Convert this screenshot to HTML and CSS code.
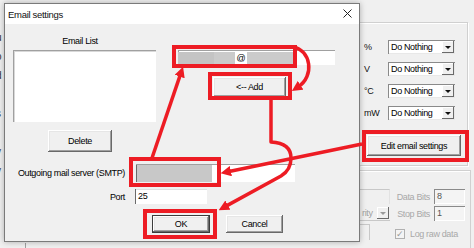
FILE: index.html
```html
<!DOCTYPE html>
<html>
<head>
<meta charset="utf-8">
<link rel="stylesheet" href="styles.css">
</head>
<body>
<div class="parent">
  <div class="p-left">
    <div class="edge">
      <span>u</span><span>o</span><span>d</span><span>r</span><span>s</span><span>l</span><span>v</span><span>v</span><span> </span><span> </span><span>r</span>
    </div>
    <div class="p-bottom">
      <span class="vline"></span>
      <span class="hundred">100</span>
    </div>
  </div>
  <div class="p-right">
    <div class="grp1">
      <div class="rows">
        <div class="row"><span class="lbl">%</span><div class="combo"><span class="ctext">Do Nothing</span><span class="arr"></span></div></div>
        <div class="row"><span class="lbl">V</span><div class="combo"><span class="ctext">Do Nothing</span><span class="arr"></span></div></div>
        <div class="row"><span class="lbl">°C</span><div class="combo"><span class="ctext">Do Nothing</span><span class="arr"></span></div></div>
        <div class="row"><span class="lbl">mW</span><div class="combo"><span class="ctext">Do Nothing</span><span class="arr"></span></div></div>
      </div>
      <div class="btn edit">Edit email settings</div>
    </div>
    <div class="grp2">
      <div class="dfield"></div>
      <span class="dlbl">Data Bits</span>
      <div class="sfield">8</div>
      <div class="dcombo"><span class="ctext">rity</span><span class="arr dis"></span></div>
      <span class="dlbl">Stop Bits</span>
      <div class="sfield">1</div>
      <div class="dfield low"></div>
      <div class="chk"><span class="box">✓</span><span class="dlbl2">Log raw data</span></div>
    </div>
  </div>
</div>

<div class="dialog">
  <div class="titlebar">
    <span class="title">Email settings</span>
    <svg class="close" width="9" height="9" viewBox="0 0 9 9"><path d="M0.5 0.5 L8.5 8.5 M8.5 0.5 L0.5 8.5" stroke="#222" stroke-width="1" fill="none"/></svg>
  </div>
  <div class="dlg-body">
    <div class="top">
      <div class="list-col">
        <div class="list-label">Email List</div>
        <div class="listbox"></div>
        <div class="btn delete">Delete</div>
      </div>
      <div class="right-col">
        <div class="field email"><span class="g1"></span><span class="g2"></span><span class="at">@</span><span class="g3"></span></div>
        <div class="btn add">&lt;-- Add</div>
      </div>
    </div>
    <div class="form">
      <span class="flbl">Outgoing mail server (SMTP)</span>
      <div class="field smtp"><span class="gs"></span></div>
      <span class="flbl">Port</span>
      <div class="field port">25</div>
      <div class="buttons">
        <div class="btn ok">OK</div>
        <div class="btn cancel">Cancel</div>
      </div>
    </div>
  </div>
</div>

<svg class="marks" width="474" height="248" viewBox="0 0 474 248">
  <defs>
    <marker id="ah" viewBox="0 0 10 10" refX="3" refY="5" markerWidth="3" markerHeight="3" orient="auto" markerUnits="strokeWidth">
      <path d="M0,0 L10,5 L0,10 z" fill="#ed1c24"/>
    </marker>
  </defs>
  <g fill="none" stroke="#ed1c24" stroke-width="4">
    <rect x="174" y="47" width="121" height="19"/>
    <rect x="210" y="74" width="80" height="24"/>
    <rect x="131" y="159" width="88" height="26"/>
    <rect x="145" y="211" width="70" height="26"/>
    <rect x="364" y="132" width="103" height="28"/>
  </g>
  <g fill="none" stroke="#ed1c24" stroke-width="3.5" stroke-linejoin="round">
    <path d="M152,158 L180.7,73.6" marker-end="url(#ah)"/>
    <path d="M293,47 C311,50 315,76 298,87" marker-end="url(#ah)"/>
    <path d="M271,99 V142 Q291,143 291,158 Q291,170 281,176 L225.1,206.6" marker-end="url(#ah)"/>
    <path d="M362,144 L227.8,171.7" marker-end="url(#ah)"/>
  </g>
</svg>
</body>
</html>
```

FILE: styles.css
```css
* { box-sizing: border-box; margin: 0; padding: 0; }
html, body { width: 474px; height: 248px; overflow: hidden; }
body {
  position: relative;
  background: #f0f0f0;
  font-family: "Liberation Sans", Arial, sans-serif;
  font-size: 9px;
  letter-spacing: -0.35px;
  color: #000;
  white-space: nowrap;
}

/* ---------- parent window ---------- */
.parent { display: grid; grid-template-columns: 360px 114px; height: 248px; }
.p-left { display: flex; flex-direction: column; overflow: hidden; padding-top: 28px; }
.edge { display: flex; flex-direction: column; margin-left: -4px; line-height: 19px; font-size: 10px; color: #333; }
.p-bottom { margin-top: auto; height: 7px; display: flex; }
.vline { width: 1px; height: 7px; background: #a0a0a0; margin-left: 25px; }
.hundred { margin-left: 128px; line-height: 12px; margin-top: 2px; }

.p-right { padding-top: 22px; display: flex; flex-direction: column; }
.grp1 {
  width: 108px;
  border: 1px solid #d0d0d0;
  border-left: none;
  box-shadow: inset 0 1px 0 #fff, 1px 1px 0 #fff;
  padding: 17px 0 9px 4px;
}
.rows { display: flex; flex-direction: column; gap: 8px; }
.row { display: flex; align-items: center; height: 14px; }
.lbl { width: 24px; color: #111; }
.combo {
  width: 67px; height: 14px; background: #fff;
  display: flex; align-items: center;
  box-shadow: inset 1px 1px 0 #8a8a8a, inset -1px -1px 0 #e8e8e8;
}
.ctext { padding-left: 3px; line-height: 12px; }
.arr {
  margin-left: auto; width: 12px; height: 12px; margin-right: 1px;
  background: #f0f0f0;
  box-shadow: inset -1px -1px 0 #6a6a6a, inset 1px 1px 0 #fff;
  display: flex; align-items: center; justify-content: center;
}
.arr::after {
  content: ""; width: 0; height: 0;
  border-left: 3px solid transparent; border-right: 3px solid transparent;
  border-top: 3px solid #111;
}
.arr.dis::after { border-top-color: #9a9a9a; }

.btn {
  background: #f0f0f0;
  display: flex; align-items: center; justify-content: center;
  box-shadow: inset -1px -1px 0 #696969, inset 1px 1px 0 #fff, inset -2px -2px 0 #a0a0a0, inset 2px 2px 0 #e6e6e6;
  color: #000;
}
.edit { width: 94px; height: 21px; margin: 15px 0 0 3px; }

.grp2 {
  margin-top: 4px; width: 111px; height: 80px;
  border-top: 1px solid #d0d0d0; border-right: 1px solid #d0d0d0;
  box-shadow: inset 0 1px 0 #fff;
  padding-top: 18px;
  display: grid;
  grid-template-columns: 30px 44px 31px;
  grid-template-rows: 15px 15px 15px;
  row-gap: 2px;
  align-items: center;
}
.dfield { height: 15px; border-top: 1px solid #c8c8c8; border-right: 1px solid #e2e2e2; background: #f0f0f0; }
.dfield.low { height: 16px; margin-top: 3px; width: 10px; border-right: 1px solid #c8c8c8; }
.dlbl { color: #a8a8a8; text-align: right; padding-right: 4px; }
.sfield {
  height: 15px; background: #f4f4f4; color: #555;
  box-shadow: inset 1px 1px 0 #8a8a8a, inset -1px -1px 0 #fff;
  padding-left: 3px; line-height: 15px;
}
.dcombo { height: 14px; display: flex; align-items: center; color: #a0a0a0; border-bottom: 1px solid #c8c8c8; }
.dcombo .ctext { padding-left: 2px; }
.chk { grid-column: 2 / 4; display: flex; align-items: center; padding-left: 5px; margin-top: 6px; }
.box {
  width: 10px; height: 10px; border: 1px solid #b0b0b0; background: #f4f4f4;
  font-size: 9px; line-height: 8px; color: #9a9a9a; text-align: center; letter-spacing: 0;
}
.dlbl2 { color: #a8a8a8; margin-left: 5px; }

/* ---------- dialog ---------- */
.dialog {
  position: absolute; left: 4px; top: 3px;
  width: 356px; height: 239px;
  background: #f0f0f0;
  border: 1px solid #7a7a7a;
  box-shadow: 0 0 6px rgba(0,0,0,0.28);
  display: flex; flex-direction: column;
}
.titlebar {
  height: 20px; background: #fff;
  display: flex; align-items: center; justify-content: space-between;
  padding: 0 7px 0 3px;
}
.title { font-size: 9.5px; letter-spacing: -0.3px; color: #111; }
.close { display: block; margin-top: -1px; }

.dlg-body { padding: 12px 0 0 8px; display: flex; flex-direction: column; }
.top { display: flex; gap: 22px; }
.list-col { width: 143px; display: flex; flex-direction: column; }
.list-label { height: 11px; line-height: 11px; text-align: center; padding-right: 9px; margin-bottom: 3px; }
.listbox { height: 72px; background: #fff; box-shadow: inset 1px 1px 0 #a0a0a0, inset 2px 2px 0 #d8d8d8; }
.delete { width: 64px; height: 22px; margin: 8px 0 0 35px; }

.right-col { padding-top: 14px; display: flex; flex-direction: column; }
.field { background: #fff; box-shadow: inset 1px 1px 0 #a0a0a0; display: flex; align-items: stretch; }
.email { width: 157px; height: 15px; padding: 2px 0 1px 0; }
.g1 { width: 36px; background: #c4c4c4; }
.g2 { width: 21px; background: #cbcbcb; }
.at { width: 12px; text-align: center; line-height: 12px; letter-spacing: 0; }
.g3 { width: 46px; background: #cbcbcb; }
.add { width: 73px; height: 20px; margin: 12px 0 0 35px; }

.form {
  margin-top: 12px;
  display: grid;
  grid-template-columns: 112px 220px;
  column-gap: 10px;
  row-gap: 7px;
  align-items: center;
}
.flbl { text-align: right; }
.smtp { width: 159px; height: 18px; margin-left: 1px; }
.gs { width: 76px; background: #c8c8c8; border-left: 1px solid #6a6a6a; margin-top: 1px; }
.port { width: 72px; height: 15px; padding-left: 3px; line-height: 15px; box-shadow: inset 1px 0 0 #6a6a6a, inset 0 1px 0 #e0e0e0; }
.buttons { grid-column: 2; display: flex; gap: 16px; padding-left: 17px; margin-top: 4px; }
.ok { width: 58px; height: 18px; border: 1px solid #3c3c3c; }
.cancel { width: 57px; height: 18px; }

/* ---------- annotation overlay ---------- */
.marks { position: absolute; left: 0; top: 0; pointer-events: none; }
```
